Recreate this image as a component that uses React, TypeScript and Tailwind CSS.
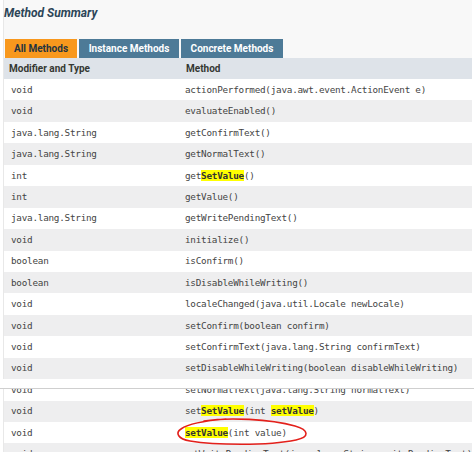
import React from "react";

type Part = { t: string; hl?: boolean };
type Row = { type: string; parts: Part[]; glitch?: boolean };

const rows: Row[] = [
  { type: "void", parts: [{ t: "actionPerformed(java.awt.event.ActionEvent e)" }] },
  { type: "void", parts: [{ t: "evaluateEnabled()" }] },
  { type: "java.lang.String", parts: [{ t: "getConfirmText()" }] },
  { type: "java.lang.String", parts: [{ t: "getNormalText()" }] },
  { type: "int", parts: [{ t: "get" }, { t: "SetValue", hl: true }, { t: "()" }] },
  { type: "int", parts: [{ t: "getValue()" }] },
  { type: "java.lang.String", parts: [{ t: "getWritePendingText()" }] },
  { type: "void", parts: [{ t: "initialize()" }] },
  { type: "boolean", parts: [{ t: "isConfirm()" }] },
  { type: "boolean", parts: [{ t: "isDisableWhileWriting()" }] },
  { type: "void", parts: [{ t: "localeChanged(java.util.Locale newLocale)" }] },
  { type: "void", parts: [{ t: "setConfirm(boolean confirm)" }] },
  { type: "void", parts: [{ t: "setConfirmText(java.lang.String confirmText)" }] },
  { type: "void", parts: [{ t: "setDisableWhileWriting(boolean disableWhileWriting)" }] },
  { type: "void", parts: [{ t: "setNormalText(java.lang.String normalText)" }], glitch: true },
  {
    type: "void",
    parts: [
      { t: "set" },
      { t: "SetValue", hl: true },
      { t: "(int " },
      { t: "setValue", hl: true },
      { t: ")" },
    ],
  },
  { type: "void", parts: [{ t: "setValue", hl: true }, { t: "(int value)" }] },
  { type: "void", parts: [{ t: "setWritePendingText(java.lang.String writePendingText)" }] },
];

const mono = "font-['DejaVu_Sans_Mono',monospace] text-[9.3px] tracking-[-0.24px] text-[#444444]";
const sans = "font-['Roboto','Liberation_Sans',sans-serif]";

export default function App() {
  return (
    <div className="relative w-[474px] h-[452px] overflow-hidden bg-white">
      <div className="ml-[3px] w-[469px] h-[452px] bg-[#f8f8f8] border-l border-[#e8e8e8]">
        <div className={`h-[39px] pt-[6px] ${sans} text-[12px] leading-[14px] font-bold italic text-[#2c4557]`}>
          Method Summary
        </div>
        <div className={`flex h-[19px] gap-[2px] ml-[1px] ${sans} text-[10px] font-bold`}>
          <div className="w-[72px] flex items-center justify-center bg-[#f8981d] text-[#253441]">All Methods</div>
          <div className="w-[100px] flex items-center justify-center bg-[#4d7a97] text-white">Instance Methods</div>
          <div className="w-[102px] flex items-center justify-center bg-[#4d7a97] text-white">Concrete Methods</div>
        </div>
        <div className={`flex h-[21px] items-center bg-[#dee3e9] ${sans} text-[10px] font-bold text-[#353833]`}>
          <div className="w-[174px] pl-[5px]">Modifier and Type</div>
          <div className="pl-[8px]">Method</div>
        </div>
        {rows.map((r, i) => (
          <div
            key={i}
            className={`relative flex h-[21.45px] items-center ${mono} ${i % 2 === 0 ? "bg-white" : "bg-[#eeeeef]"}`}
          >
            <div className="w-[174px] pl-[7px] whitespace-pre">{r.type}</div>
            <div className="pl-[7px] whitespace-pre">
              {r.parts.map((p, j) =>
                p.hl ? (
                  <span key={j} className="bg-[#ffff00] font-bold text-[#333333]">
                    {p.t}
                  </span>
                ) : (
                  <span key={j}>{p.t}</span>
                )
              )}
            </div>
            {r.glitch && (
              <div className="absolute left-[-4px] w-[474px] top-0 h-[9.5px] bg-white border-b border-[#cfcfcf]" />
            )}
          </div>
        ))}
      </div>
      <svg className="absolute left-0 top-0" width="474" height="452" viewBox="0 0 474 452" fill="none">
        <path
          d="M204 421 C228 417 270 419 295 426 C309 430 310 437 296 440 C268 446 214 445 190 441 C178 439 175 433 181 429 C188 424 200 421 226 419"
          stroke="#e3201b"
          strokeWidth="1.6"
          strokeLinecap="round"
        />
      </svg>
    </div>
  );
}
